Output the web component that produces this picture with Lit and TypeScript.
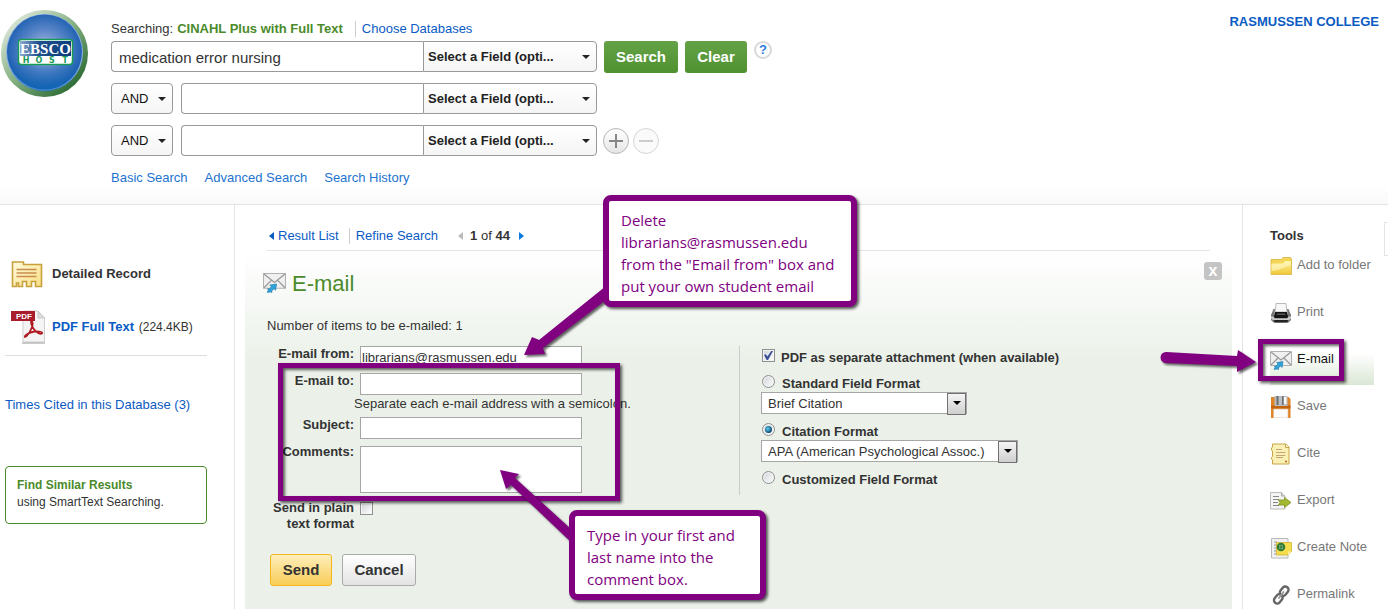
import { LitElement, html, css, svg } from "lit";
import { customElement } from "lit/decorators.js";

const folderIcon = html`<svg class="icon" viewBox="0 0 22 20" width="22" height="20" aria-hidden="true">
  <defs><linearGradient id="f" x1="0" y1="0" x2="0" y2="1"><stop offset="0" stop-color="#fff3a0"/><stop offset="1" stop-color="#efc93a"/></linearGradient></defs>
  <path d="M1 3.500H11.500L13 1.500H20.500L21.500 3V18.500H1Z" fill="#f3d558" stroke="#d8b43c" stroke-width=".8"/>
  <path d="M1.500 7.500 13 7 15 5H21V18H1.500Z" fill="url(#f)"/>
  <path d="M1.500 15C8 15 14 11 21 9V6H15L13 8H1.500Z" fill="#fff9c8" opacity=".6"/></svg>`;

const printIcon = html`<svg class="icon" viewBox="0 0 22 20" width="22" height="20" aria-hidden="true">
  <path d="M6 .5H16L17 9H5Z" fill="#f7f7f7" stroke="#aaa" stroke-width=".8"/>
  <path d="M3.500 6 1 12V17L3.500 19.500H18.500L21 17V12L18.500 6H17L18 13H4L5 6Z" fill="#777"/>
  <path d="M5 9H17L18.500 15H3.500Z" fill="#151515"/><path d="M7 10.500H15L15.500 12H6.500Z" fill="#555"/>
  <path d="M1 13.500H3.500L5 15.500H17L18.500 13.500H21V15.500L19 17H3L1 15.500Z" fill="#c9c9c9"/>
  <path d="M4 17H18L17.500 19.500H4.500Z" fill="#222"/></svg>`;

const mailIcon = (w: number) => html`<svg class="icon" viewBox="0 0 22 19" width=${w} height=${Math.round((w * 19) / 22)} aria-hidden="true">
  <path d="M.5.500H21.500V14.500H.5Z" fill="#f0f0f0" stroke="#b2b2b2"/>
  <path d="M1 1 11 9 21 1M1 14 8 7M21 14 14 7" fill="none" stroke="#979797" stroke-width="1.200"/>
  <path d="M13 10.500 6.500 11.500 8 13 6 15H4.500L5 16.500 4 18.500 7 18 8.500 18.500V17L10.500 15 12 16.500Z" fill="#2fa3d8" stroke="#1c79a8" stroke-width=".6"/></svg>`;

const saveIcon = html`<svg class="icon" viewBox="0 0 22 22" width="22" height="22" aria-hidden="true">
  <path d="M1 1H18.500L20.500 3V22H1Z" fill="#e08428"/><path d="M1 9.500H20.500V12.500H1Z" fill="#c2640f"/>
  <path d="M4.500 0H17.500V10H4.500Z" fill="#b9bec4"/><path d="M6.500 0H8.500V9H6.500ZM12 0H13.500V9H12Z" fill="#6d6d6d"/>
  <path d="M14 1H16.500V8H14Z" fill="#f5f5f5"/><path d="M3.500 13H18V22H3.500Z" fill="#fcfcfc" stroke="#e0b58c" stroke-width=".6"/></svg>`;

const citeIcon = html`<svg class="icon" viewBox="0 0 22 22" width="22" height="22" aria-hidden="true">
  <path d="M2.500 1H16L19 4V21H2.500V17L1.500 16V14.500L2.500 13.500V8L1.500 7V5L2.500 4Z" fill="#fbf0b4" stroke="#c9a54a"/>
  <path d="M15.500 1V4.500H19" fill="#fffbe6" stroke="#c9a54a"/>
  <path d="M6 6.500H12M6 9.500H15.500M6 12.500H15.500M6 14.500H13" stroke="#c4a67a" stroke-width="1"/>
  <path d="M15 18.500h2" stroke="#c0632c" stroke-width="1.500"/></svg>`;

const exportIcon = html`<svg class="icon" viewBox="0 0 22 20" width="22" height="20" aria-hidden="true">
  <path d="M.5 1.500H11.500L15 5V18H.5Z" fill="#f4f4f4" stroke="#bbb"/><path d="M11.500 1.500V5H15" fill="#ddd" stroke="#aaa"/>
  <path d="M3 5.500H9M3 8.500H9M3 11.500H8M3 14.500H9" stroke="#888"/>
  <path d="M8.500 9H14.500V6.500L21 11.500 14.500 16.500V14H8.500L10 11.500Z" fill="#a3b932" stroke="#7e9320" stroke-width=".8"/></svg>`;

const noteIcon = html`<svg class="icon" viewBox="0 0 22 21" width="22" height="21" aria-hidden="true">
  <path d="M1.500 .5H18V20H1.500Z" fill="#f1f1f1" stroke="#b8b8b8"/>
  <path d="M4 4H7M4 7H7M4 10H7M4 13H7M4 16H7" stroke="#999"/>
  <path d="M6.500 4.500H21.500V13.500L18 17H6.500Z" fill="#f5dd4d" stroke="#cfb330" stroke-width=".8"/>
  <path d="M21.500 13.500H18V17Z" fill="#fff3a0"/>
  <circle cx="11" cy="9" r="3.200" fill="#fff" stroke="#2f7d36" stroke-width="2.200"/><path d="M11 7V11M9 9H13" stroke="#2f7d36" stroke-width="1.400"/></svg>`;

const linkIcon = html`<svg class="icon" viewBox="0 0 22 20" width="22" height="20" aria-hidden="true">
  <g fill="none" stroke="#666" stroke-width="2.400"><rect x="11" y="1" width="6.500" height="10" rx="3.200" transform="rotate(38 14 6)"/>
  <rect x="5" y="9" width="6.500" height="10" rx="3.200" transform="rotate(38 8.500 14)"/></g>
  <path d="M13.500 7 9 13" stroke="#999" stroke-width="1.800" stroke-linecap="round"/></svg>`;

const recordIcon = html`<svg class="icon" viewBox="0 0 34 27" width="34" height="27" aria-hidden="true">
  <defs><linearGradient id="r" x1="0" y1="0" x2="1" y2="1"><stop offset="0" stop-color="#fffbe0"/><stop offset="1" stop-color="#f8df82"/></linearGradient></defs>
  <path d="M1 1H12V3.500H30V25.500H24V20.500H20V25.500H15V20.500H11V25.500H7V22H5V25.500H1Z" fill="url(#r)" stroke="#c8a03c" stroke-width="1.600"/>
  <path d="M5 8.500H25M5 12H25M5 15.500H25" stroke="#c98d4c" stroke-width="1.500"/></svg>`;

const pdfIcon = html`<svg class="icon" viewBox="0 0 35 34" width="35" height="34" aria-hidden="true">
  <path d="M12 1H27L33.500 8V32H12Z" fill="#f4f4f4" stroke="#cfcfcf"/><path d="M27 1V8H33.500Z" fill="#ddd" stroke="#c4c4c4" stroke-width=".8"/>
  <path d="M11 33H34" stroke="#aaa" stroke-width="1.200"/>
  <path d="M0 1H24V11H0Z" fill="#a81c2c"/>
  <text x="5" y="9" class="pdf-mark">PDF</text>
  <path d="M20 11C22 11 22 14 21 17C19 22 17 26 14 27C13 25 19 22 24 21.500C28 21 32 22 31 23.500C28 25 20 19 20 11Z" fill="none" stroke="#b01a22" stroke-width="1.800"/></svg>`;

const logo = html`<svg class="logo" viewBox="0 0 88 88" width="88" height="88" role="img" aria-label="EBSCO Host">
  <defs>
    <linearGradient id="lr" x1=".1" y1=".1" x2=".85" y2=".9"><stop offset="0" stop-color="#dfe9dc"/><stop offset=".5" stop-color="#84b082"/><stop offset="1" stop-color="#2b6a33"/></linearGradient>
    <radialGradient id="lb" cx=".5" cy=".48" r=".55"><stop offset="0" stop-color="#b9c6ea"/><stop offset=".5" stop-color="#5b86c8"/><stop offset="1" stop-color="#1259ad"/></radialGradient>
    <linearGradient id="ll" x1="0" y1="0" x2="1" y2="0"><stop offset="0" stop-color="#8cabd0"/><stop offset=".35" stop-color="#1f528f"/><stop offset="1" stop-color="#0c3c7c"/></linearGradient>
    <linearGradient id="lo" x1="0" y1="0" x2="0" y2="1"><stop offset="0" stop-color="#0b5fae" stop-opacity=".1"/><stop offset="1" stop-color="#0868b8"/></linearGradient>
  </defs>
  <circle cx="44.500" cy="43.500" r="43.500" fill="url(#lr)"/>
  <circle cx="44.500" cy="42.500" r="38.500" fill="#8fb0e6"/>
  <circle cx="44.500" cy="42" r="37.500" fill="url(#lb)"/>
  <path d="M7.500 50Q44 62 81.500 50A37.500 37.500 0 0 1 7.500 50Z" fill="url(#lo)" opacity=".6"/>
  <rect x="18.500" y="29.500" width="54" height="25" rx="3" fill="#fff" stroke="#179a56" stroke-width="1.500"/>
  <path d="M20 31H71V46H20Z" fill="url(#ll)"/>
  <text x="45.500" y="44" class="logo-top">EBSCO</text>
  <g class="logo-bottom"><text x="26" y="53">H</text><text x="39" y="53">O</text><text x="52" y="53">S</text><text x="65" y="53">T</text></g></svg>`;

const tools = [
  { label: "Add to folder", icon: folderIcon },
  { label: "Print", icon: printIcon },
  { label: "E-mail", icon: mailIcon(22), active: true },
  { label: "Save", icon: saveIcon },
  { label: "Cite", icon: citeIcon },
  { label: "Export", icon: exportIcon },
  { label: "Create Note", icon: noteIcon },
  { label: "Permalink", icon: linkIcon },
];

const arrows = [
  "M606 286 539 340 532 337 524 355 545 354 543 348 606 300Z",
  "M572 530 515 478 519 474 500 470 506 489 511 485 572 543Z",
  "M1166 352 1237 356 1238 350 1256 362 1237 372V366L1166 363A5.500 5.500 0 0 1 1166 352Z",
];

@customElement("app-root")
export class AppRoot extends LitElement {
  static styles = css`
    :host { display: flex; flex-direction: column; position: relative; min-height: 100vh; overflow: hidden; background: #fff; color: #333; font: 13px/16px "Liberation Sans", Arial, sans-serif; }
    * { box-sizing: border-box; }
    a { color: #0a5bc4; text-decoration: none; }
    svg { display: block; }
    input, select, textarea, button { font: inherit; color: #333; margin: 0; }
    h1, h2, p, ul { margin: 0; padding: 0; list-style: none; }

    .header { display: flex; align-items: flex-start; padding: 10px 9px 0 0; height: 205px; border-bottom: 1px solid #e4e4e4; background: linear-gradient(#fff 185px, #f9f9f9); }
    .logo { flex: none; margin-right: 23px; }
    .logo-top { font: bold 15px "Liberation Serif", serif; fill: #fff; text-anchor: middle; }
    .logo-bottom { font: bold 8px "DejaVu Sans", sans-serif; fill: #179a56; text-anchor: middle; }
    .search { flex: 1; display: flex; flex-direction: column; gap: 11px; padding-top: 11px; }
    .databases { display: flex; margin-bottom: -7px; }
    .databases strong { color: #4b8b2b; margin-left: 4px; }
    .databases a { border-left: 1px solid #ccc; margin-left: 12px; padding-left: 6px; }
    .row { display: flex; height: 31px; }
    .bar { display: flex; width: 486px; height: 31px; }
    .query { flex: 1; min-width: 0; height: 31px; border: 1px solid #999; border-right: 0; border-radius: 4px 0 0 4px; padding: 1px 7px 0; font-size: 15px; background: #fff; }
    .pick { position: relative; display: block; }
    .pick::after { content: ""; position: absolute; right: 7px; top: 14px; border: 4px solid transparent; border-top-color: #222; border-bottom: 0; pointer-events: none; }
    .pick select { appearance: none; width: 100%; height: 31px; border: 1px solid #999; padding: 0 4px; background: linear-gradient(#fff, #f5f5f5); }
    .field { width: 174px; }
    .field select { font-weight: bold; border-radius: 0 4px 4px 0; color: #222; }
    .op { width: 62px; margin-right: 8px; }
    .op select { border-radius: 4px; padding: 0 9px; color: #111; }
    .go { height: 32px; margin-left: 7px; border: 0; border-radius: 3px; padding: 0; background: linear-gradient(#64a146, #4f9131); color: #fff; font-size: 15px; font-weight: bold; }
    .go-search { width: 74px; }
    .go-clear { width: 62px; }
    .help { width: 18px; height: 18px; margin-left: 7px; border: 2px solid #d9d9d9; border-radius: 50%; padding: 0; background: #fff; color: #2f7be0; font-weight: bold; line-height: 14px; }
    .round { width: 26px; height: 26px; margin: 3px 0 0 6px; border: 1px solid #b5b5b5; border-radius: 50%; padding: 0; background: linear-gradient(#fff, #e6e6e6); color: #888; display: grid; place-items: center; }
    .round + .round { margin-left: 4px; border-color: #d5d5d5; color: #ccc; background: #fafafa; }
    .modes { display: flex; gap: 17px; padding-top: 3px; }
    .modes a { color: #2273cf; }
    .college { font-weight: bold; padding-top: 4px; }

    .main { flex: 1; display: grid; grid-template-columns: 235px 1fr 146px; }
    .side { border-right: 1px solid #e4e4e4; padding: 51px 27px 0 5px; }
    .doc { display: flex; align-items: center; gap: 6px; padding-left: 6px; height: 36px; white-space: nowrap; }
    .doc .icon { flex: none; width: 35px; }
    .doc + .doc { margin-top: 17px; }
    .small { font-size: 12px; margin-left: 1px; }
    .cited { border-top: 1px solid #ddd; margin-top: 10px; padding-top: 41px; }
    .similar { margin-top: 53px; border: 1px solid #4b8b2b; border-radius: 4px; padding: 10px 11px 12px; font-size: 12px; line-height: 17px; }
    .similar a { display: block; color: #4b8b2b; font-weight: bold; }
    .pdf-mark { font: bold 8px "Liberation Sans", sans-serif; fill: #fff; }

    .center { padding: 0 10px; display: flex; flex-direction: column; }
    .nav { display: flex; align-items: center; margin: 0 22px; height: 46px; padding-top: 16px; border-bottom: 1px solid #e4e4e4; }
    .tri { border: 4px solid transparent; }
    .tri-left { border-right: 5px solid #0a5bc4; border-left: 0; }
    .tri-right { border-left: 5px solid #0a7be0; border-right: 0; }
    .tri-off { border-right-color: #bbb; }
    .nav .results { display: flex; align-items: center; gap: 4px; padding: 0 10px 0 2px; }
    .nav .refine { border-left: 1px solid #ccc; padding: 0 20px 0 6px; }
    .nav .count { padding: 0 9px 0 7px; }
    .panel { flex: 1; padding: 11px 10px 20px 18px; background: linear-gradient(#fff, #ebf1e9 110px); }
    .title { display: flex; align-items: flex-start; }
    .title .icon { margin-top: 11px; }
    h1 { flex: 1; margin: 8px 0 0 6px; color: #4b8b2b; font-size: 22px; font-weight: normal; line-height: 28px; }
    .close { width: 18px; height: 18px; border: 0; border-radius: 3px; padding: 0; background: #c4c4c4; color: #fff; font-size: 16px; font-weight: bold; line-height: 16px; }
    .items { margin: 20px 0 12px 4px; }
    .cols { display: flex; align-items: flex-start; }
    .form { flex: 0 0 476px; display: grid; grid-template-columns: 91px 228px; align-items: start; }
    .form label { text-align: right; font-weight: bold; }
    .form input[type="text"], .form textarea { display: block; width: 222px; height: 22px; margin: 0 0 0 6px; border: 1px solid #a6a6a6; padding: 0 1px; background: #fff; resize: none; }
    .form label.next, .form input.next { margin-top: 5px; }
    .form textarea.next { height: 47px; margin-top: 7px; }
    .hint { grid-column: 2; margin: 1px 0 0; white-space: nowrap; }
    .form label.plain { margin: 7px 0 22px; }
    .form input.plain { margin: 9px 0 0 6px; }
    .actions { display: flex; gap: 10px; padding-left: 7px; }
    .actions button { width: 74px; height: 32px; border: 1px solid #aaa; border-radius: 3px; padding: 0; background: linear-gradient(#fff, #e3e3e3); font-size: 15px; font-weight: bold; }
    .actions .send { width: 62px; border-color: #f2b71e; background: linear-gradient(#fdeebb, #f9cd56); }
    .format { border-left: 1px solid #ccc; height: 149px; padding: 3px 0 0 21px; }
    .opt { display: flex; align-items: flex-start; gap: 7px; height: 16px; margin-top: 9px; padding-left: 1px; font-weight: bold; line-height: 18px; }
    .opt:first-child { margin: 0 0 10px; gap: 6px; }
    .opt:first-child + .opt { margin-top: 0; }
    input[type="checkbox"], input[type="radio"] { appearance: none; flex: none; width: 13px; height: 13px; border: 1px solid #8e8f8f; background: linear-gradient(135deg, #cfd3d8, #fff); box-shadow: inset 0 0 0 1px #f4f4f4; }
    input[type="radio"] { border-radius: 50%; }
    input[type="checkbox"]:checked::before { content: ""; display: block; width: 9px; height: 9px; margin: 1px; background: #3b4f96; clip-path: polygon(0 45%, 20% 35%, 38% 60%, 80% 0, 100% 0, 45% 100%, 30% 100%); }
    input[type="radio"]:checked::before { content: ""; display: block; width: 7px; height: 7px; margin: 2px; border-radius: 50%; background: radial-gradient(circle at 40% 40%, #5fd0f5, #0b4670 70%); }
    .drop { position: relative; display: block; height: 22px; margin-top: 1px; }
    .drop select { appearance: none; display: block; width: 100%; height: 22px; border: 1px solid #a6a6a6; padding: 1px 6px 0; background: #fff; }
    .drop::before { content: ""; position: absolute; right: 1px; top: 1px; width: 17px; height: 20px; border: 1px solid #707070; background: linear-gradient(#f4f4f4, #cfcfcf); pointer-events: none; }
    .drop::after { content: ""; position: absolute; right: 6px; top: 9px; border: 4px solid transparent; border-top-color: #000; border-bottom: 0; pointer-events: none; }
    .brief { width: 206px; }
    .apa { width: 257px; }

    .tools { border-left: 1px solid #e4e4e4; padding-left: 27px; }
    .tools-head { display: flex; justify-content: space-between; padding-top: 17px; height: 52px; }
    .tools-head h2 { padding-top: 6px; font-size: 13px; line-height: 16px; }
    .tab { width: 4px; height: 34px; border: 1px solid #e4e4e4; border-right: 0; }
    .tools ul { display: flex; flex-direction: column; gap: 23px; padding-right: 14px; margin-top: -4px; }
    .tool { display: flex; align-items: center; height: 24px; gap: 5px; color: #777; white-space: nowrap; }
    .tool .icon { flex: none; width: 22px; margin-top: 2px; }
    .active { background: linear-gradient(#fff 6px, #dbe7d6); padding-bottom: 14px; margin-bottom: -14px; }
    .active .tool { color: #111; }

    .callout { position: absolute; border: 6px solid #800080; border-radius: 8px; padding: 8px 12px 4px; background: #fff; color: #800080; box-shadow: 2px 2px 3px rgba(0, 0, 0, 0.65); font: 15px/22px "Open Sans", "Noto Sans", sans-serif; white-space: nowrap; }
    .delete-note { left: 603px; top: 195px; width: 254px; }
    .name-note { left: 569px; top: 510px; width: 197px; }
    .frame { position: absolute; border: 5px solid #800080; box-shadow: 2px 2px 3px rgba(0, 0, 0, 0.65), inset 2px 2px 3px rgba(0, 0, 0, 0.6); pointer-events: none; }
    .form-frame { left: 278px; top: 363px; width: 342px; height: 138px; }
    .tool-frame { left: 1258px; top: 339px; width: 86px; height: 42px; }
    .arrows { position: absolute; left: 0; top: 0; pointer-events: none; fill: #800080; filter: drop-shadow(2px 2px 1px rgba(0, 0, 0, 0.6)); }
  `;

  private fieldSelect() {
    return html`<span class="pick field"><select aria-label="Select a field"><option>Select a Field (opti...</option></select></span>`;
  }

  private extraRow(n: number) {
    return html`
      <span class="pick op"><select aria-label="Operator ${n}"><option>AND</option><option>OR</option><option>NOT</option></select></span>
      <input class="query" type="text" aria-label="Search term ${n}" />
      ${this.fieldSelect()}`;
  }

  render() {
    return html`
      <header class="header">
        ${logo}
        <div class="search">
          <div class="databases"><span>Searching:</span><strong>CINAHL Plus with Full Text</strong><a href="#">Choose Databases</a></div>
          <div class="row">
            <div class="bar"><input class="query" type="text" aria-label="Search term 1" .value=${"medication error nursing"} />${this.fieldSelect()}</div>
            <button class="go go-search">Search</button>
            <button class="go go-clear">Clear</button>
            <button class="help" aria-label="Help">?</button>
          </div>
          <div class="row"><div class="bar">${this.extraRow(2)}</div></div>
          <div class="row">
            <div class="bar">${this.extraRow(3)}</div>
            <button class="round" aria-label="Add row"><svg width="14" height="14"><path d="M7 0V14M0 7H14" stroke="currentColor" stroke-width="2"/></svg></button>
            <button class="round" aria-label="Remove row"><svg width="14" height="14"><path d="M0 7H14" stroke="currentColor" stroke-width="2"/></svg></button>
          </div>
          <nav class="modes"><a href="#">Basic Search</a><a href="#">Advanced Search</a><a href="#">Search History</a></nav>
        </div>
        <a class="college" href="#">RASMUSSEN COLLEGE</a>
      </header>

      <div class="main">
        <aside class="side">
          <div class="doc">${recordIcon}<strong>Detailed Record</strong></div>
          <div class="doc">${pdfIcon}<span><a href="#"><strong>PDF Full Text</strong></a> <span class="small">(224.4KB)</span></span></div>
          <div class="cited"><a href="#">Times Cited in this Database (3)</a></div>
          <div class="similar"><a href="#">Find Similar Results</a>using SmartText Searching.</div>
        </aside>

        <main class="center">
          <nav class="nav">
            <a class="results" href="#"><span class="tri tri-left"></span>Result List</a>
            <a class="refine" href="#">Refine Search</a>
            <span class="tri tri-left tri-off"></span>
            <span class="count"><strong>1</strong> of <strong>44</strong></span>
            <span class="tri tri-right"></span>
          </nav>
          <section class="panel">
            <div class="title">${mailIcon(23)}<h1>E-mail</h1><button class="close" aria-label="Close">x</button></div>
            <p class="items">Number of items to be e-mailed: 1</p>
            <div class="cols">
              <div class="form">
                <label for="from">E-mail from:</label><input id="from" type="text" .value=${"librarians@rasmussen.edu"} />
                <label class="next" for="to">E-mail to:</label><input class="next" id="to" type="text" />
                <p class="hint">Separate each e-mail address with a semicolon.</p>
                <label class="next" for="subject">Subject:</label><input class="next" id="subject" type="text" />
                <label class="next" for="comments">Comments:</label><textarea class="next" id="comments"></textarea>
                <label class="plain" for="plain">Send in plain text format</label><input class="plain" id="plain" type="checkbox" />
              </div>
              <div class="format">
                <div class="opt"><input id="pdf" type="checkbox" checked /><label for="pdf">PDF as separate attachment (when available)</label></div>
                <div class="opt"><input id="standard" name="format" type="radio" /><label for="standard">Standard Field Format</label></div>
                <span class="drop brief"><select aria-label="Standard field format"><option>Brief Citation</option></select></span>
                <div class="opt"><input id="citation" name="format" type="radio" checked /><label for="citation">Citation Format</label></div>
                <span class="drop apa"><select aria-label="Citation format"><option>APA (American Psychological Assoc.)</option></select></span>
                <div class="opt"><input id="custom" name="format" type="radio" /><label for="custom">Customized Field Format</label></div>
              </div>
            </div>
            <div class="actions"><button class="send">Send</button><button>Cancel</button></div>
          </section>
        </main>

        <aside class="tools">
          <div class="tools-head"><h2>Tools</h2><span class="tab"></span></div>
          <ul>${tools.map((t) => html`<li class=${t.active ? "active" : ""}><a class="tool" href="#">${t.icon}${t.label}</a></li>`)}</ul>
        </aside>
      </div>

      <div class="frame form-frame"></div>
      <div class="frame tool-frame"></div>
      <svg class="arrows" width="1388" height="609" aria-hidden="true">${arrows.map((d) => svg`<path d=${d} />`)}</svg>
      <div class="callout delete-note">Delete<br />librarians@rasmussen.edu<br />from the "Email from" box and<br />put your own student email</div>
      <div class="callout name-note">Type in your first and<br />last name into the<br />comment box.</div>
    `;
  }
}
